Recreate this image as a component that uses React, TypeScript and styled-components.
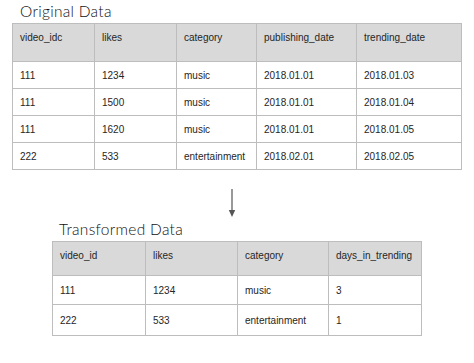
import styled, { createGlobalStyle } from "styled-components";

const GlobalStyle = createGlobalStyle`
  body {
    margin: 0;
    background: #fff;
  }
`;

const Page = styled.div`
  width: 474px;
  height: 363px;
  display: flex;
  flex-direction: column;
  background: #fff;
`;

const Section = styled.div<{ $left: number }>`
  display: flex;
  flex-direction: column;
  margin-left: ${(p) => p.$left}px;
`;

const Title = styled.h2<{ $indent: number }>`
  margin: 0 0 0 ${(p) => p.$indent}px;
  font-family: "Lato", "Open Sans", sans-serif;
  font-weight: 300;
  font-size: 15.5px;
  line-height: 23px;
  color: #111;
  letter-spacing: 0.3px;
`;

const Table = styled.table<{ $w: number }>`
  width: ${(p) => p.$w}px;
  border-collapse: collapse;
  table-layout: fixed;
  font-family: "Liberation Sans", Arial, sans-serif;
  font-size: 10px;
  color: #262626;
`;

const HeadCell = styled.th<{ $h: number }>`
  height: ${(p) => p.$h}px;
  box-sizing: border-box;
  padding: 8px 7px 0;
  text-align: left;
  vertical-align: top;
  font-weight: 400;
  white-space: nowrap;
  background: #d9d9d9;
  border: 1px solid #bdbdbd;
`;

const Cell = styled.td<{ $h: number }>`
  height: ${(p) => p.$h}px;
  box-sizing: border-box;
  padding: 0 7px;
  vertical-align: middle;
  white-space: nowrap;
  border: 1px solid #bdbdbd;
`;

const ArrowRow = styled.div`
  display: flex;
  padding-left: 228px;
  margin-top: 19px;
  height: 29px;
`;

type Spec = {
  width: number;
  cols: { name: string; w: number }[];
  headH: number;
  rowH: number[];
  rows: string[][];
};

const original: Spec = {
  width: 450,
  cols: [
    { name: "video_idc", w: 82 },
    { name: "likes", w: 82 },
    { name: "category", w: 80 },
    { name: "publishing_date", w: 100 },
    { name: "trending_date", w: 105 },
  ],
  headH: 38,
  rowH: [27, 27, 27, 27],
  rows: [
    ["111", "1234", "music", "2018.01.01", "2018.01.03"],
    ["111", "1500", "music", "2018.01.01", "2018.01.04"],
    ["111", "1620", "music", "2018.01.01", "2018.01.05"],
    ["222", "533", "entertainment", "2018.02.01", "2018.02.05"],
  ],
};

const transformed: Spec = {
  width: 370,
  cols: [
    { name: "video_id", w: 93 },
    { name: "likes", w: 92 },
    { name: "category", w: 91 },
    { name: "days_in_trending", w: 93 },
  ],
  headH: 34,
  rowH: [29, 31],
  rows: [
    ["111", "1234", "music", "3"],
    ["222", "533", "entertainment", "1"],
  ],
};

const DataTable = ({ spec }: { spec: Spec }) => (
  <Table $w={spec.width}>
    <colgroup>
      {spec.cols.map((c) => (
        <col key={c.name} style={{ width: c.w }} />
      ))}
    </colgroup>
    <thead>
      <tr>
        {spec.cols.map((c) => (
          <HeadCell key={c.name} $h={spec.headH}>
            {c.name}
          </HeadCell>
        ))}
      </tr>
    </thead>
    <tbody>
      {spec.rows.map((row, i) => (
        <tr key={i}>
          {row.map((v, j) => (
            <Cell key={j} $h={spec.rowH[i]}>
              {v}
            </Cell>
          ))}
        </tr>
      ))}
    </tbody>
  </Table>
);

const DownArrow = () => (
  <svg width="8" height="29" viewBox="0 0 8 29">
    <line x1="4" y1="0" x2="4" y2="23" stroke="#555" strokeWidth="1.2" />
    <path d="M0.8 21 L7.2 21 L4 28 Z" fill="#555" />
  </svg>
);

export default function App() {
  return (
    <Page>
      <GlobalStyle />
      <Section $left={12}>
        <Title $indent={8}>Original Data</Title>
        <DataTable spec={original} />
      </Section>
      <ArrowRow>
        <DownArrow />
      </ArrowRow>
      <Section $left={52}>
        <Title $indent={7}>Transformed Data</Title>
        <DataTable spec={transformed} />
      </Section>
    </Page>
  );
}
